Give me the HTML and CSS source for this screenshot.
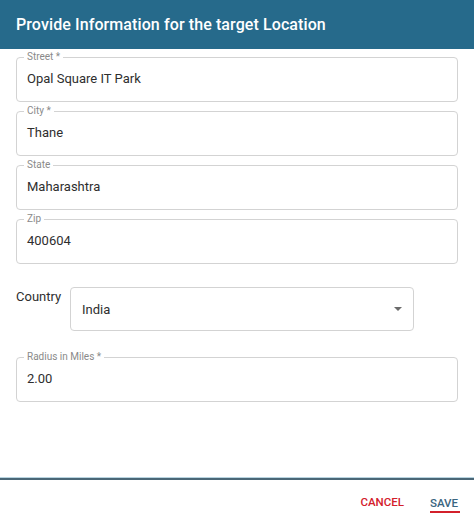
FILE: index.html
```html
<!DOCTYPE html>
<html>
<head>
<meta charset="utf-8">
<link rel="stylesheet" href="styles.css">
</head>
<body>
<div class="dialog">
  <header class="dialog-header">
    <h1 class="dialog-title">Provide Information for the target Location</h1>
  </header>
  <main class="dialog-body">
    <fieldset class="field">
      <legend class="field-label">Street *</legend>
      <div class="field-value">Opal Square IT Park</div>
    </fieldset>
    <fieldset class="field">
      <legend class="field-label">City *</legend>
      <div class="field-value">Thane</div>
    </fieldset>
    <fieldset class="field">
      <legend class="field-label">State</legend>
      <div class="field-value">Maharashtra</div>
    </fieldset>
    <fieldset class="field">
      <legend class="field-label">Zip</legend>
      <div class="field-value">400604</div>
    </fieldset>
    <div class="country-row">
      <div class="country-label">Country</div>
      <div class="select">
        <span class="select-value">India</span>
        <span class="select-arrow"></span>
      </div>
    </div>
    <fieldset class="field field-radius">
      <legend class="field-label">Radius in Miles *</legend>
      <div class="field-value">2.00</div>
    </fieldset>
  </main>
  <footer class="dialog-footer">
    <button class="btn btn-cancel">Cancel</button>
    <button class="btn btn-save">Save</button>
  </footer>
</div>
</body>
</html>
```
FILE: styles.css
```css
* { box-sizing: border-box; }
html, body {
  margin: 0;
  padding: 0;
  background: #ffffff;
  font-family: Roboto, "Liberation Sans", Arial, sans-serif;
}
.dialog {
  width: 474px;
  height: 519px;
  display: flex;
  flex-direction: column;
}
.dialog-header {
  height: 49px;
  background: #266a8b;
  display: flex;
  align-items: center;
  padding: 0 16px;
  flex-shrink: 0;
}
.dialog-title {
  margin: 0;
  color: #ffffff;
  font-size: 16px;
  font-weight: 500;
  letter-spacing: 0.1px;
}
.dialog-body {
  flex: 1;
  padding: 2px 16px 0 16px;
  display: flex;
  flex-direction: column;
}
.field {
  margin: 0 0 3px 0;
  border: 1px solid #d3d3d3;
  border-radius: 4px;
  padding: 0 10px 6px 10px;
  min-width: 0;
}
.field-label {
  font-size: 10px;
  line-height: 12px;
  color: #8a8a8a;
  padding: 0 3px;
  margin-left: -3px;
}
.field-value {
  height: 32px;
  line-height: 32px;
  font-size: 13px;
  color: #2e2e2e;
}
.country-row {
  display: flex;
  align-items: flex-start;
  margin-top: 20px;
}
.country-label {
  width: 54px;
  font-size: 13px;
  line-height: 20px;
  color: #2e2e2e;
}
.select {
  width: 344px;
  height: 44px;
  border: 1px solid #d3d3d3;
  border-radius: 4px;
  display: flex;
  align-items: center;
  justify-content: space-between;
  padding: 0 11px 0 11px;
}
.select-value {
  font-size: 13px;
  color: #2e2e2e;
}
.select-arrow {
  width: 0;
  height: 0;
  border-left: 4px solid transparent;
  border-right: 4px solid transparent;
  border-top: 4px solid #6b6b6b;
}
.field-radius {
  margin-top: 20px;
}
.dialog-footer {
  height: 41px;
  flex-shrink: 0;
  border-top: 2px solid #4a6777;
  box-shadow: 0 -1px 0 #b8d4e0;
  display: flex;
  justify-content: flex-end;
  align-items: center;
  gap: 26px;
  padding: 4px 14px 0 0;
}
.btn {
  border: 0;
  background: none;
  padding: 0;
  font-family: Roboto, "Liberation Sans", Arial, sans-serif;
  font-size: 11.5px;
  font-weight: 500;
  text-transform: uppercase;
  letter-spacing: 0;
  cursor: pointer;
}
.btn-cancel {
  color: #d3202b;
}
.btn-save {
  color: #3a6580;
  border-bottom: 2px solid #d3202b;
  padding-bottom: 1px;
  margin-top: 5px;
  padding-left: 0;
  padding-right: 2px;
}
```
